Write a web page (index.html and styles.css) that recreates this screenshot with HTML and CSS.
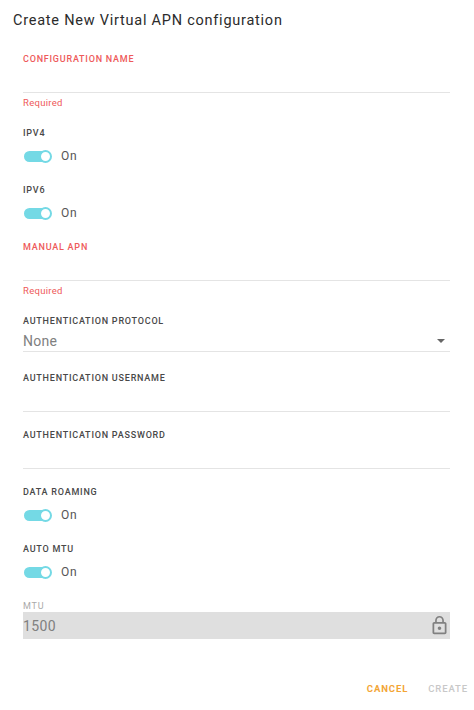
FILE: index.html
```html
<!DOCTYPE html>
<html lang="en">
<head>
<meta charset="utf-8">
<title>Create New Virtual APN configuration</title>
<link rel="stylesheet" href="styles.css">
</head>
<body>
<div class="dialog">
  <h1 class="title">Create New Virtual APN configuration</h1>
  <form class="form">
    <div class="field text error">
      <div class="label">CONFIGURATION NAME</div>
      <div class="input"></div>
      <div class="hint">Required</div>
    </div>
    <div class="field toggle-field">
      <div class="label">IPV4</div>
      <div class="toggle"><span class="track"><span class="thumb"></span></span><span class="state">On</span></div>
    </div>
    <div class="field toggle-field">
      <div class="label">IPV6</div>
      <div class="toggle"><span class="track"><span class="thumb"></span></span><span class="state">On</span></div>
    </div>
    <div class="field text error">
      <div class="label">MANUAL APN</div>
      <div class="input"></div>
      <div class="hint">Required</div>
    </div>
    <div class="field select-field">
      <div class="label">AUTHENTICATION PROTOCOL</div>
      <div class="select"><span>None</span><span class="caret"></span></div>
    </div>
    <div class="field text">
      <div class="label">AUTHENTICATION USERNAME</div>
      <div class="input"></div>
    </div>
    <div class="field text">
      <div class="label">AUTHENTICATION PASSWORD</div>
      <div class="input"></div>
    </div>
    <div class="field toggle-field">
      <div class="label">DATA ROAMING</div>
      <div class="toggle"><span class="track"><span class="thumb"></span></span><span class="state">On</span></div>
    </div>
    <div class="field toggle-field">
      <div class="label">AUTO MTU</div>
      <div class="toggle"><span class="track"><span class="thumb"></span></span><span class="state">On</span></div>
    </div>
    <div class="field disabled">
      <div class="label">MTU</div>
      <div class="locked"><span>1500</span>
        <svg class="lock" viewBox="0 0 24 24" width="21" height="21" aria-hidden="true"><path d="M18 8h-1V6c0-2.76-2.24-5-5-5S7 3.24 7 6v2H6c-1.1 0-2 .9-2 2v10c0 1.1.9 2 2 2h12c1.1 0 2-.9 2-2V10c0-1.1-.9-2-2-2zM8.9 6c0-1.71 1.39-3.1 3.1-3.1s3.1 1.39 3.1 3.1v2H8.9V6zM18 20H6V10h12v10zm-6-3c1.1 0 2-.9 2-2s-.9-2-2-2-2 .9-2 2 .9 2 2 2z"/></svg>
      </div>
    </div>
  </form>
  <div class="actions">
    <span class="btn cancel">CANCEL</span>
    <span class="btn create">CREATE</span>
  </div>
</div>
</body>
</html>
```

FILE: styles.css
```css
* { box-sizing: border-box; }
html, body { margin: 0; padding: 0; background: #fff; }
body { font-family: Roboto, "Liberation Sans", sans-serif; width: 474px; height: 710px; overflow: hidden; }
.dialog { height: 710px; display: flex; flex-direction: column; }
.title { margin: 0; padding: 12px 13px 0; height: 52px; font-size: 14.5px; line-height: 18px; font-weight: 400; letter-spacing: 0.76px; color: #2b2b2b; }
.form { padding: 0 24px 0 23px; }
.field { height: 57px; }
.label { font-size: 9px; line-height: 14px; font-weight: 500; letter-spacing: 0.78px; color: #484848; }
.input { border-bottom: 1px solid #e4e4e4; }
.text .input { height: 27px; }
.error { height: 74px; }
.error .label { color: #ee5a5a; }
.hint { margin-top: 4px; font-size: 9.5px; line-height: 12px; letter-spacing: 0.3px; color: #ee5a5a; }
.toggle { display: flex; align-items: center; height: 16px; margin-top: 8px; }
.track { position: relative; display: block; width: 27px; height: 11px; border-radius: 6px; background: #74d9e5; margin-left: 1px; }
.thumb { position: absolute; right: -1px; top: -1px; width: 13px; height: 13px; border-radius: 50%; background: #fff; border: 2px solid #74d9e5; }
.state { margin-left: 10px; font-size: 12px; letter-spacing: 0.7px; color: #555; }
.select { display: flex; justify-content: space-between; align-items: center; height: 24px; padding: 2px 5px 0 0; border-bottom: 1px solid #e4e4e4; font-size: 14px; letter-spacing: 0.3px; color: #808080; }
.caret { width: 0; height: 0; border-left: 4.5px solid transparent; border-right: 4.5px solid transparent; border-top: 4.5px solid #666; }
.disabled .label { height: 13px; color: #aaa; font-weight: 400; }
.locked { display: flex; justify-content: space-between; align-items: center; height: 27px; padding-right: 0; background: #dfdfdf; font-size: 14px; letter-spacing: 0.4px; color: #808080; }
.lock { fill: #808080; }
.actions { display: flex; justify-content: flex-end; gap: 20px; padding: 26px 6px 0 0; }
.btn { font-size: 9.5px; line-height: 14px; font-weight: 500; letter-spacing: 0.9px; }
.cancel { color: #f3a536; font-weight: 700; }
.create { color: #c8c8c8; }
```
